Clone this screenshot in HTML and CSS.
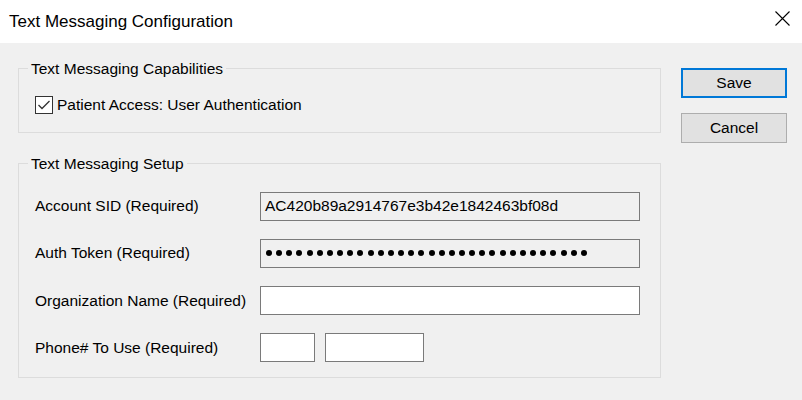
FILE: index.html
```html
<!DOCTYPE html>
<html>
<head>
<meta charset="utf-8">
<link rel="stylesheet" href="styles.css">
</head>
<body>
<div class="window">
  <header class="titlebar">
    <span class="title">Text Messaging Configuration</span>
    <svg class="close" width="15" height="15" viewBox="0 0 15 15">
      <path d="M0.5 0.5 L14.5 14.5 M14.5 0.5 L0.5 14.5" stroke="#000" stroke-width="1.1" fill="none"/>
    </svg>
  </header>
  <main class="content">
    <div class="groups">
      <fieldset class="group group-cap">
        <legend>Text Messaging Capabilities</legend>
        <label class="check">
          <svg class="box" width="18" height="18" viewBox="0 0 18 18">
            <rect x="0.5" y="0.5" width="17" height="17" fill="#fff" stroke="#333"/>
            <polyline points="3.5,9 7,12.5 14.5,5" fill="none" stroke="#333" stroke-width="1.3"/>
          </svg>
          <span>Patient Access: User Authentication</span>
        </label>
      </fieldset>
      <fieldset class="group group-setup">
        <legend>Text Messaging Setup</legend>
        <div class="form">
          <span class="label">Account SID (Required)</span>
          <div class="field readonly">AC420b89a2914767e3b42e1842463bf08d</div>
          <span class="label">Auth Token (Required)</span>
          <div class="field readonly"><span class="dots"><i></i><i></i><i></i><i></i><i></i><i></i><i></i><i></i><i></i><i></i><i></i><i></i><i></i><i></i><i></i><i></i><i></i><i></i><i></i><i></i><i></i><i></i><i></i><i></i><i></i><i></i><i></i><i></i><i></i><i></i><i></i><i></i></span></div>
          <span class="label">Organization Name (Required)</span>
          <div class="field"></div>
          <span class="label">Phone# To Use (Required)</span>
          <div class="phone">
            <div class="field area"></div>
            <div class="field number"></div>
          </div>
        </div>
      </fieldset>
    </div>
    <div class="buttons">
      <button class="btn btn-default">Save</button>
      <button class="btn">Cancel</button>
    </div>
  </main>
</div>
</body>
</html>
```
FILE: styles.css
```css
html, body {
  margin: 0;
  padding: 0;
}
body {
  width: 802px;
  height: 400px;
  overflow: hidden;
  background: #f0f0f0;
  font-family: "Liberation Sans", Arial, sans-serif;
  font-size: 15.5px;
  color: #000;
}
.window {
  width: 802px;
  height: 400px;
  background: #f0f0f0;
}
.titlebar {
  height: 43px;
  background: #fff;
  display: flex;
  align-items: center;
}
.title {
  font-size: 17px;
  padding-left: 9px;
  flex: 1;
}
.close {
  align-self: flex-start;
  margin-top: 11px;
  margin-right: 12px;
}
.content {
  display: flex;
  align-items: flex-start;
  padding: 17px 0 0 18px;
}
.groups {
  display: flex;
  flex-direction: column;
}
.group {
  box-sizing: border-box;
  width: 643px;
  margin: 0;
  min-width: 0;
  border: 1px solid #dcdcdc;
  padding: 0;
}
.group legend {
  margin-left: -7px;
  padding: 0 3px;
  line-height: 17px;
}
.group-cap {
  padding: 19px 0 18px 16px;
}
.group-setup {
  margin-top: 22px;
  padding: 19.5px 0 15px 16px;
}
.check {
  display: flex;
  align-items: center;
  height: 18px;
  gap: 4px;
}
.box {
  display: block;
}
.form {
  display: grid;
  grid-template-columns: 225px 380px;
  grid-auto-rows: 29px;
  row-gap: 18.33px;
  align-items: center;
}
.field {
  box-sizing: border-box;
  height: 29px;
  border: 1px solid #7a7a7a;
  background: #fff;
  padding-left: 4px;
  display: flex;
  align-items: center;
}
.field.readonly {
  background: #f0f0f0;
}
.dots {
  display: flex;
  gap: 4.17px;
  padding-left: 1px;
}
.dots i {
  display: block;
  width: 6px;
  height: 6px;
  border-radius: 50%;
  background: #000;
}
.phone {
  display: flex;
  gap: 10px;
}
.field.area {
  width: 55px;
}
.field.number {
  width: 99px;
}
.buttons {
  display: flex;
  flex-direction: column;
  gap: 15px;
  margin-left: 20px;
  margin-top: 8px;
}
.btn {
  box-sizing: border-box;
  width: 106px;
  height: 30px;
  background: #e1e1e1;
  border: 1px solid #adadad;
  font-family: "Liberation Sans", Arial, sans-serif;
  font-size: 15.5px;
  color: #000;
  padding: 0;
}
.btn-default {
  border: 2px solid #0078d7;
}
```
